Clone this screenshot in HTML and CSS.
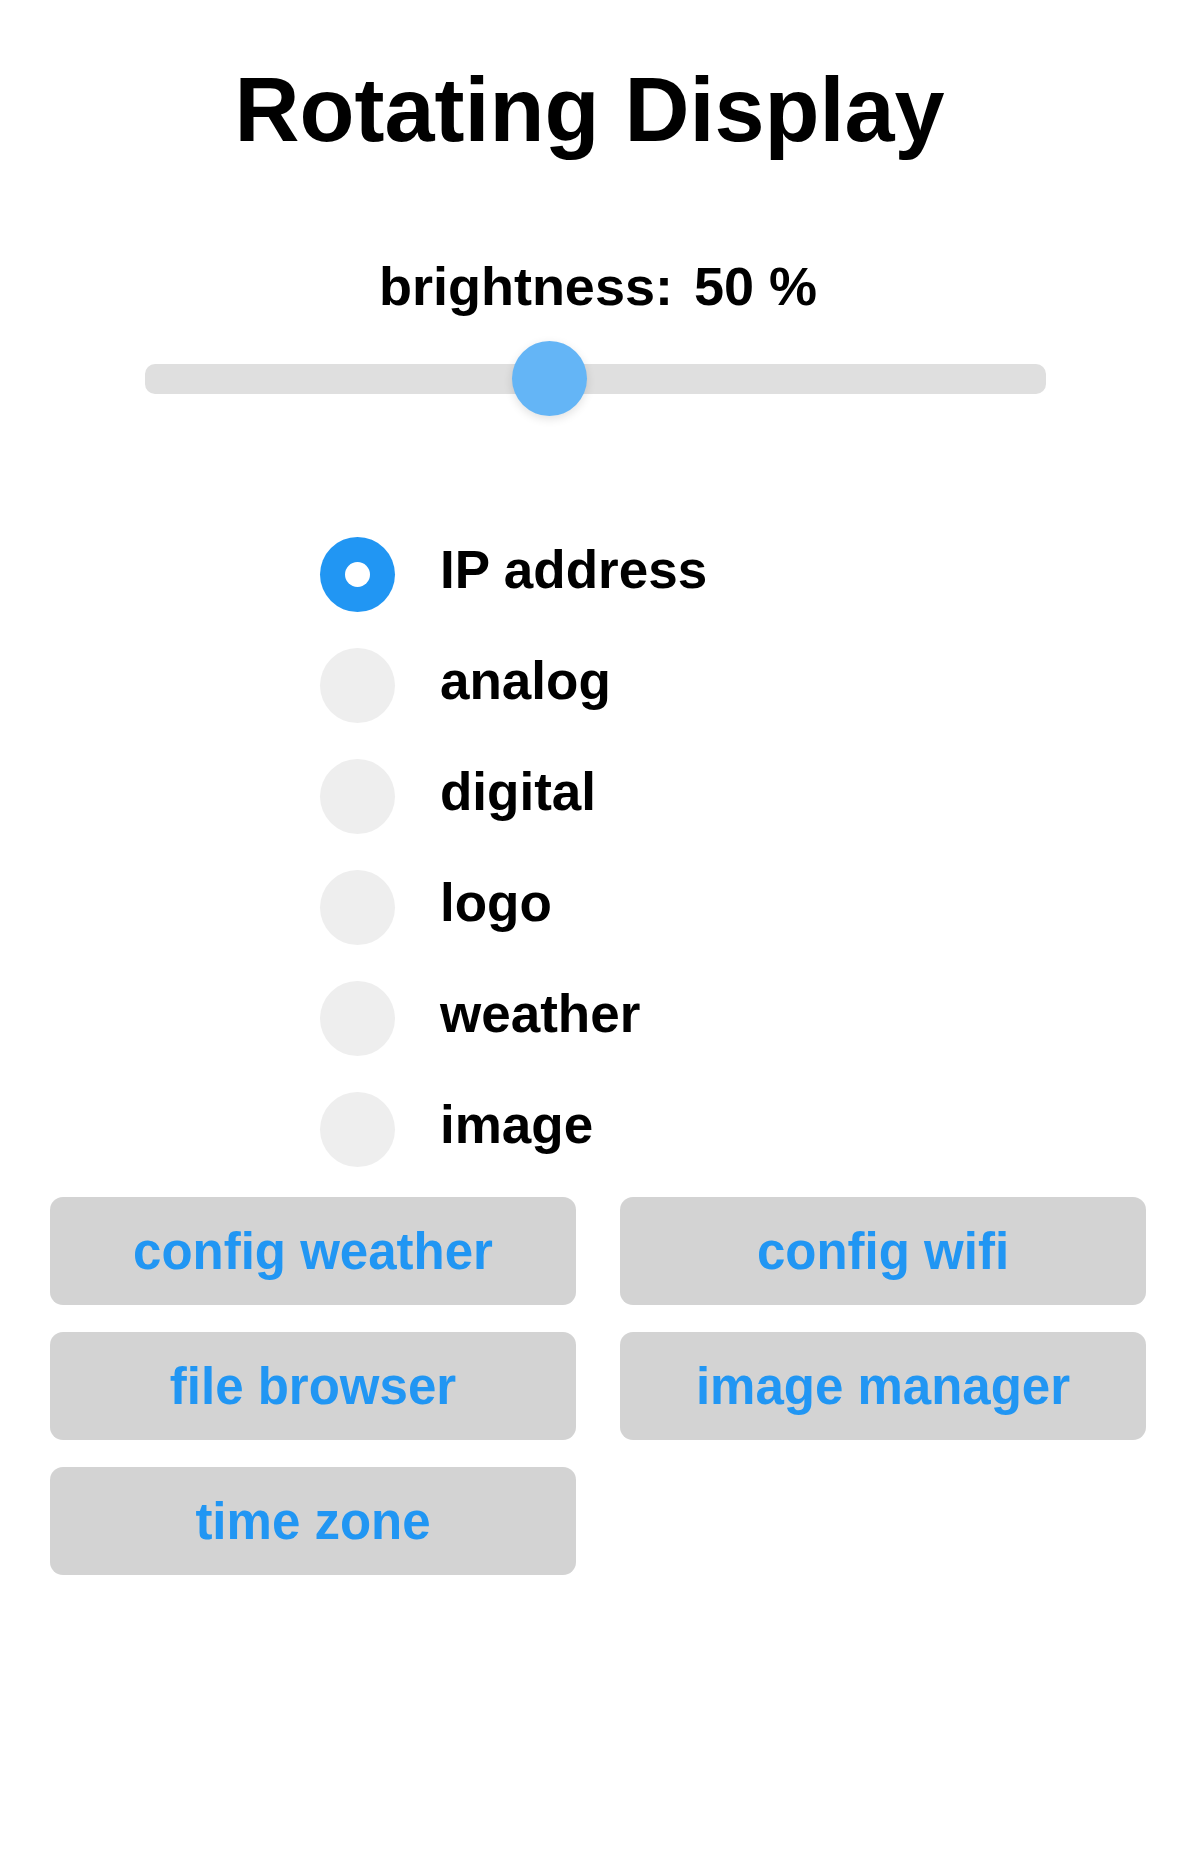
FILE: index.html
```html
<!DOCTYPE html>
<html lang="en">
<head>
<meta charset="utf-8">
<title>Rotating Display</title>
<link rel="stylesheet" href="styles.css">
</head>
<body>
<main class="page">
  <h1 class="title">Rotating Display</h1>
  <div class="brightness"><span>brightness:</span> <span class="value">50 %</span></div>
  <div class="slider">
    <div class="track"></div>
    <div class="thumb"></div>
  </div>
  <div class="radios">
    <label class="radio-row"><span class="radio checked"><span class="dot"></span></span><span class="radio-label">IP address</span></label>
    <label class="radio-row"><span class="radio"></span><span class="radio-label">analog</span></label>
    <label class="radio-row"><span class="radio"></span><span class="radio-label">digital</span></label>
    <label class="radio-row"><span class="radio"></span><span class="radio-label">logo</span></label>
    <label class="radio-row"><span class="radio"></span><span class="radio-label">weather</span></label>
    <label class="radio-row"><span class="radio"></span><span class="radio-label">image</span></label>
  </div>
  <div class="buttons">
    <button class="btn">config weather</button>
    <button class="btn">config wifi</button>
    <button class="btn">file browser</button>
    <button class="btn">image manager</button>
    <button class="btn">time zone</button>
  </div>
</main>
</body>
</html>
```
FILE: styles.css
```css
html, body {
  margin: 0;
  padding: 0;
  background: #ffffff;
}
body {
  font-family: "Liberation Sans", Arial, Helvetica, sans-serif;
  font-weight: bold;
  color: #000000;
  width: 1179px;
}
.page {
  display: flex;
  flex-direction: column;
}
.title {
  margin: 58px 0 0 0;
  font-size: 90px;
  line-height: 104px;
  font-weight: bold;
  text-align: center;
}
.brightness {
  margin-top: 92px;
  font-size: 54px;
  line-height: 64px;
  text-align: center;
  padding-left: 17px;
}
.brightness .value {
  margin-left: 6px;
}
.slider {
  position: relative;
  margin-top: 23px;
  height: 75px;
  display: flex;
  align-items: center;
  padding: 0 133px 0 145px;
}
.track {
  flex: 1;
  height: 30px;
  border-radius: 10px;
  background: #dfdfdf;
  margin-bottom: -1px;
}
.thumb {
  position: absolute;
  left: 512px;
  top: 0;
  width: 75px;
  height: 75px;
  border-radius: 50%;
  background: #64b5f6;
  box-shadow: 0 3px 10px rgba(0, 0, 0, 0.12);
}
.radios {
  margin-top: 121px;
  padding-left: 320px;
  display: flex;
  flex-direction: column;
  gap: 36px;
}
.radio-row {
  display: flex;
  align-items: center;
  height: 75px;
  gap: 45px;
}
.radio {
  width: 75px;
  height: 75px;
  border-radius: 50%;
  background: #eeeeee;
  display: flex;
  align-items: center;
  justify-content: center;
  flex: none;
}
.radio.checked {
  background: #2196f3;
}
.dot {
  width: 25px;
  height: 25px;
  border-radius: 50%;
  background: #ffffff;
}
.radio-label {
  font-size: 53px;
  line-height: 64px;
  padding-bottom: 10px;
}
.buttons {
  margin-top: 30px;
  padding: 0 33px 0 50px;
  display: grid;
  grid-template-columns: 1fr 1fr;
  column-gap: 44px;
  row-gap: 27px;
}
.btn {
  height: 108px;
  border: none;
  border-radius: 13px;
  background: #d3d3d3;
  color: #2196f3;
  font-family: "Liberation Sans", Arial, Helvetica, sans-serif;
  font-weight: bold;
  font-size: 51px;
  padding: 0;
  text-align: center;
}
```
